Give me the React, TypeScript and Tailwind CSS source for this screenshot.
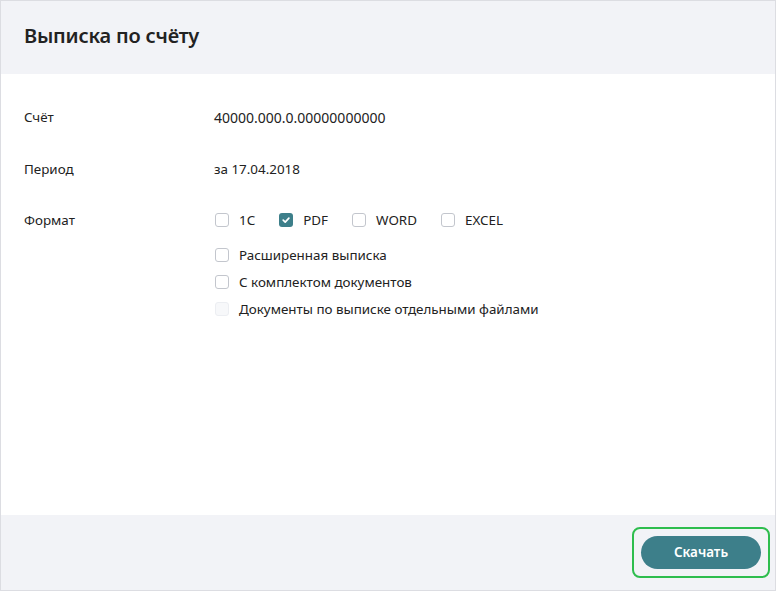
import React from "react";

function Box({ checked, disabled }: { checked?: boolean; disabled?: boolean }) {
  if (checked)
    return (
      <span className="flex h-[14px] w-[14px] items-center justify-center rounded-[3px] bg-[#3d7f8a]">
        <svg width="10" height="10" viewBox="0 0 10 10" fill="none">
          <path d="M2.2 5.2 L4.2 7.1 L7.9 3.1" stroke="white" strokeWidth="1.7" strokeLinecap="round" strokeLinejoin="round" />
        </svg>
      </span>
    );
  return (
    <span
      className={
        disabled
          ? "h-[14px] w-[14px] rounded-[3px] border border-[#eceef2] bg-[#f7f8fa]"
          : "h-[14px] w-[14px] rounded-[3px] border border-[#c3c6cd] bg-white"
      }
    />
  );
}

function Check({ label, checked, disabled }: { label: string; checked?: boolean; disabled?: boolean }) {
  return (
    <div className="flex items-center gap-[10px]">
      <Box checked={checked} disabled={disabled} />
      <span className="text-[13.4px] text-[#222]">{label}</span>
    </div>
  );
}

export default function App() {
  return (
    <div
      className="flex h-[591px] w-[776px] flex-col border border-[#dcdde2] bg-white text-[#222]"
      style={{ fontFamily: '"Noto Sans", "Open Sans", sans-serif' }}
    >
      <div className="flex h-[73px] items-center bg-[#f2f3f7] px-[23px] pb-[4px]">
        <h1 className="text-[20px] font-semibold text-[#222] tracking-[-0.2px]">Выписка по счёту</h1>
      </div>
      <div className="flex flex-1 flex-col px-[23px] pt-[33px] text-[13.4px]">
        <div className="flex h-[20px] items-center">
          <div className="w-[190px]">Счёт</div>
          <div className="text-[14px]">40000.000.0.00000000000</div>
        </div>
        <div className="mt-[32px] flex h-[20px] items-center">
          <div className="w-[190px]">Период</div>
          <div>за 17.04.2018</div>
        </div>
        <div className="mt-[31px] flex">
          <div className="w-[191px] leading-[20px]">Формат</div>
          <div className="flex flex-col">
            <div className="flex h-[20px] items-center gap-[24px]">
              <Check label="1С" />
              <Check label="PDF" checked />
              <Check label="WORD" />
              <Check label="EXCEL" />
            </div>
            <div className="mt-[15px] flex flex-col gap-[7px]">
              <div className="h-[20px] flex items-center"><Check label="Расширенная выписка" /></div>
              <div className="h-[20px] flex items-center"><Check label="С комплектом документов" /></div>
              <div className="h-[20px] flex items-center"><Check label="Документы по выписке отдельными файлами" disabled /></div>
            </div>
          </div>
        </div>
      </div>
      <div className="flex h-[75px] items-center justify-end bg-[#f2f3f7] pr-[5px]">
        <div className="rounded-[8px] border-2 border-[#2ebd4e] p-[7px]">
          <button className="h-[33px] w-[120px] rounded-full bg-[#3d7f8a] text-[13.4px] font-semibold text-white">
            Скачать
          </button>
        </div>
      </div>
    </div>
  );
}
